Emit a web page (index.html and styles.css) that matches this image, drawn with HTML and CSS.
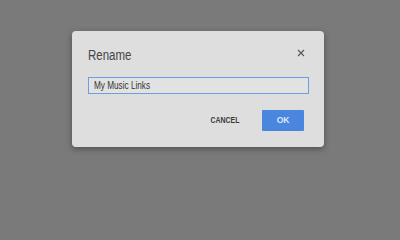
FILE: index.html
```html
<!DOCTYPE html>
<html>
<head>
<meta charset="utf-8">
<link rel="stylesheet" href="styles.css">
</head>
<body>
<div class="dialog">
  <div class="header">
    <div class="title"><span class="narrow">Rename</span></div>
    <div class="close">
      <svg width="8" height="8" viewBox="0 0 8 8"><path d="M1 1L7 7M7 1L1 7" stroke="#555" stroke-width="1.1" fill="none"/></svg>
    </div>
  </div>
  <div class="field"><span class="narrow">My Music Links</span></div>
  <div class="actions">
    <div class="btn cancel"><span class="narrow right">CANCEL</span></div>
    <div class="btn ok">OK</div>
  </div>
</div>
</body>
</html>
```
FILE: styles.css
```css
html, body {
  margin: 0;
  padding: 0;
}
body {
  background: #7a7a7a;
  width: 400px;
  height: 203px;
  overflow: hidden;
  font-family: "Liberation Sans", Arial, sans-serif;
}
.narrow {
  display: inline-block;
  transform: scaleX(0.82);
  transform-origin: left center;
}
.narrow.right {
  transform-origin: right center;
}
.dialog {
  box-sizing: border-box;
  margin: 31px 0 0 72px;
  width: 252px;
  height: 116px;
  background: #dedede;
  border-radius: 4px;
  box-shadow: 0 2px 6px rgba(0,0,0,0.35);
  padding: 12px 15px 16px 16px;
  display: flex;
  flex-direction: column;
}
.header {
  height: 24px;
  display: flex;
  align-items: center;
  justify-content: space-between;
}
.title {
  font-size: 14px;
  line-height: 24px;
  color: #444;
}
.close {
  width: 14px;
  height: 14px;
  margin-right: 1px;
  margin-top: -4px;
  display: flex;
  align-items: center;
  justify-content: center;
}
.field {
  box-sizing: border-box;
  margin-top: 10px;
  height: 17px;
  border: 1px solid #6f9ddf;
  background: #e2e2e2;
  font-size: 10px;
  line-height: 15px;
  padding-left: 5px;
  color: #333;
}
.actions {
  margin-top: 16px;
  display: flex;
  justify-content: flex-end;
  align-items: center;
  gap: 23px;
  padding-right: 5px;
}
.btn {
  height: 21px;
  line-height: 21px;
  font-size: 8.5px;
  font-weight: bold;
  text-align: center;
}
.cancel {
  color: #3a3a3a;
}
.ok {
  width: 42px;
  background: #4a86dd;
  color: #dfe8f7;
  border-radius: 1px;
}
```
